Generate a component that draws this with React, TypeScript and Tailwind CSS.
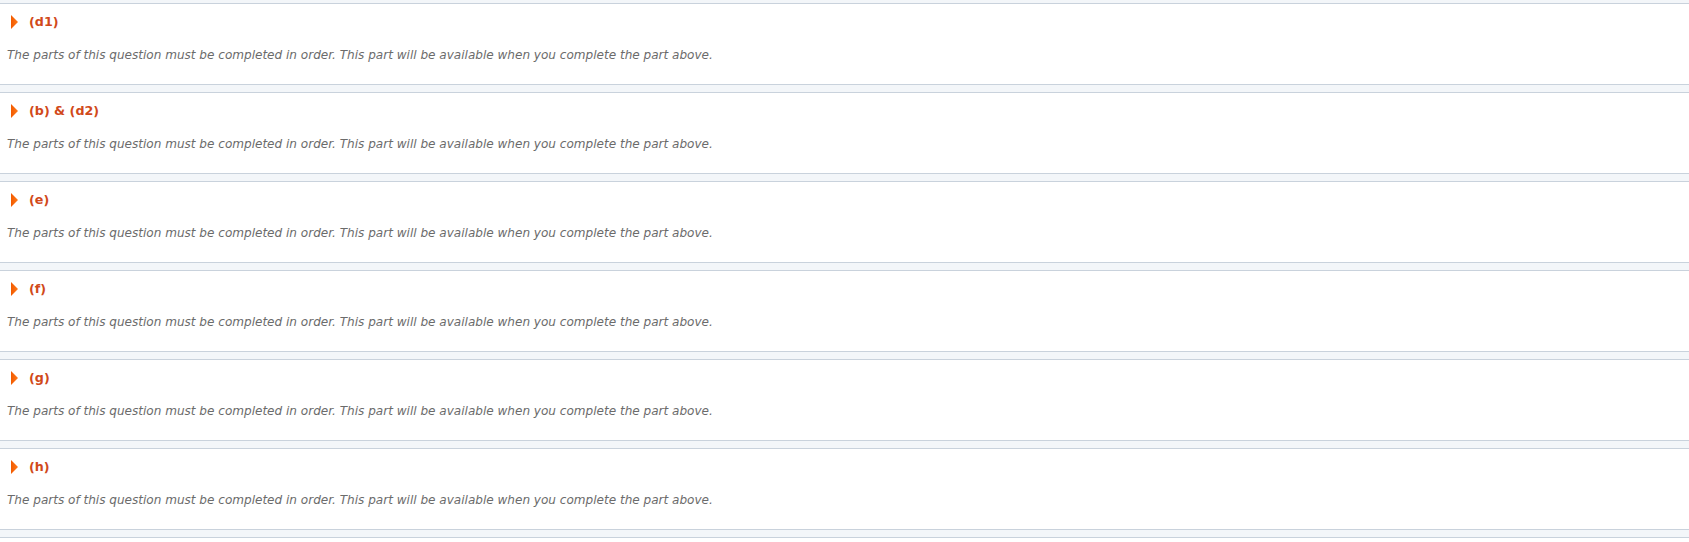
const parts = ['(d1)', '(b) & (d2)', '(e)', '(f)', '(g)', '(h)'];

function Arrow() {
  return (
    <svg width="7" height="14" viewBox="0 0 7 14" className="shrink-0">
      <defs>
        <linearGradient id="arrowFill" x1="0" y1="0" x2="1" y2="0">
          <stop offset="0" stopColor="#f25a00" />
          <stop offset="1" stopColor="#ff7a1a" />
        </linearGradient>
      </defs>
      <polygon points="0,0 7,7 0,14" fill="url(#arrowFill)" />
    </svg>
  );
}

export default function App() {
  return (
    <div className="h-[542px] overflow-hidden bg-[#f3f6f9] pt-[3px] font-['Verdana','DejaVu_Sans',sans-serif]">
      <div className="flex flex-col gap-[7px]">
        {parts.map((label) => (
          <div key={label} className="border-y border-[#c9d2dc] bg-white">
            <div className="flex items-center gap-[11px] pl-[11px] pt-[8px] h-[27px]">
              <Arrow />
              <span className="text-[12.7px] leading-[19px] font-bold text-[#d1491a]">{label}</span>
            </div>
            <p className="mt-[16px] mb-[21px] pl-[7px] text-[12.06px] leading-[16px] italic text-[#6b6b6b]">
              The parts of this question must be completed in order. This part will be available when you complete the part above.
            </p>
          </div>
        ))}
        <div className="h-[40px] border-t border-[#c9d2dc] bg-white" />
      </div>
    </div>
  );
}
